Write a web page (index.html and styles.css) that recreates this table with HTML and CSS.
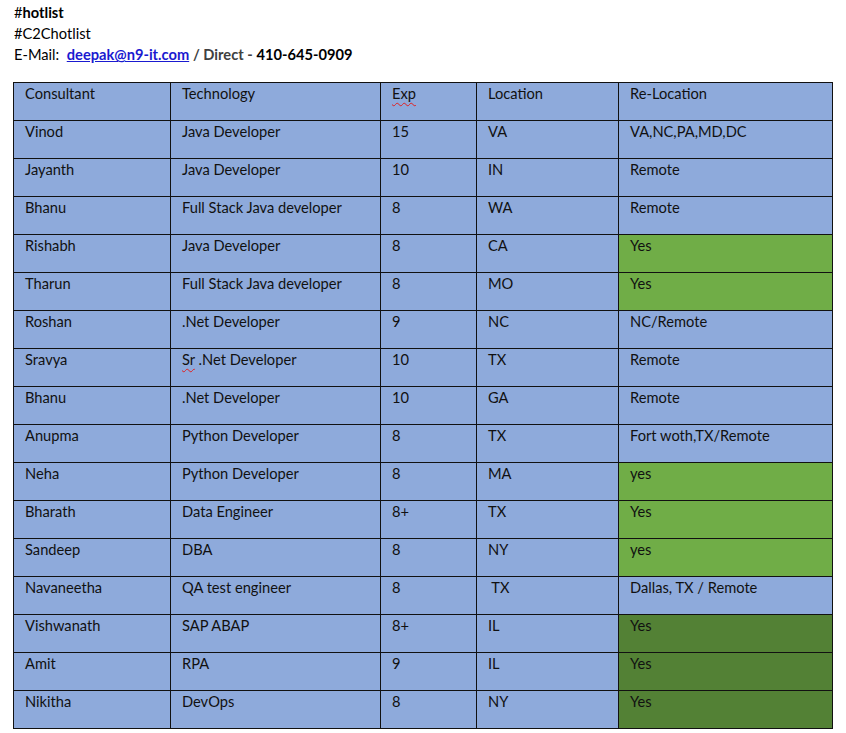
FILE: index.html
```html
<!DOCTYPE html>
<html>
<head>
<meta charset="utf-8">
<link rel="stylesheet" href="styles.css">
</head>
<body>
<div class="page">
  <div class="intro">
    <div class="line">#<b>hotlist</b></div>
    <div class="line">#C2Chotlist</div>
    <div class="line">E-Mail:&nbsp; <a class="mail" href="#">deepak@n9-it.com</a> <span class="direct">/ Direct -</span> <b>410-645-0909</b></div>
  </div>
  <table class="hot">
    <colgroup>
      <col class="c1"><col class="c2"><col class="c3"><col class="c4"><col class="c5">
    </colgroup>
    <tr><td>Consultant</td><td>Technology</td><td><span class="sp">Exp</span></td><td>Location</td><td>Re-Location</td></tr>
    <tr><td>Vinod</td><td>Java Developer</td><td>15</td><td>VA</td><td>VA,NC,PA,MD,DC</td></tr>
    <tr><td>Jayanth</td><td>Java Developer</td><td>10</td><td>IN</td><td>Remote</td></tr>
    <tr><td>Bhanu</td><td>Full Stack Java developer</td><td>8</td><td>WA</td><td>Remote</td></tr>
    <tr><td>Rishabh</td><td>Java Developer</td><td>8</td><td>CA</td><td class="g1">Yes</td></tr>
    <tr><td>Tharun</td><td>Full Stack Java developer</td><td>8</td><td>MO</td><td class="g1">Yes</td></tr>
    <tr><td>Roshan</td><td>.Net Developer</td><td>9</td><td>NC</td><td>NC/Remote</td></tr>
    <tr><td>Sravya</td><td><span class="sp">Sr</span> .Net Developer</td><td>10</td><td>TX</td><td>Remote</td></tr>
    <tr><td>Bhanu</td><td>.Net Developer</td><td>10</td><td>GA</td><td>Remote</td></tr>
    <tr><td>Anupma</td><td>Python Developer</td><td>8</td><td>TX</td><td>Fort woth,TX/Remote</td></tr>
    <tr><td>Neha</td><td>Python Developer</td><td>8</td><td>MA</td><td class="g1">yes</td></tr>
    <tr><td>Bharath</td><td>Data Engineer</td><td>8+</td><td>TX</td><td class="g1">Yes</td></tr>
    <tr><td>Sandeep</td><td>DBA</td><td>8</td><td>NY</td><td class="g1">yes</td></tr>
    <tr><td>Navaneetha</td><td>QA test engineer</td><td>8</td><td>&nbsp;TX</td><td>Dallas, TX / Remote</td></tr>
    <tr><td>Vishwanath</td><td>SAP ABAP</td><td>8+</td><td>IL</td><td class="g2">Yes</td></tr>
    <tr><td>Amit</td><td>RPA</td><td>9</td><td>IL</td><td class="g2">Yes</td></tr>
    <tr><td>Nikitha</td><td>DevOps</td><td>8</td><td>NY</td><td class="g2">Yes</td></tr>
  </table>
</div>
</body>
</html>
```
FILE: styles.css
```css
html, body {
  margin: 0;
  padding: 0;
  background: #ffffff;
}
body {
  font-family: Lato, "Open Sans", Arial, sans-serif;
  font-size: 14.67px;
  color: #000;
}
.page {
  padding: 2px 0 0 14px;
}
.intro .line {
  height: 21px;
  line-height: 21px;
  white-space: nowrap;
}
.intro b {
  font-weight: 700;
}
.mail {
  color: #1a1ad0;
  font-weight: 700;
  text-decoration: underline;
}
.direct {
  color: #404040;
  font-weight: 700;
}
.hot {
  margin-top: 17px;
  margin-left: -1px;
  border-collapse: collapse;
  table-layout: fixed;
  width: 819px;
}
.c1 { width: 157px; }
.c2 { width: 210px; }
.c3 { width: 96px; }
.c4 { width: 142px; }
.c5 { width: 214px; }
.hot td {
  height: 38px;
  box-sizing: border-box;
  border: 1px solid #111;
  background: #8eaadb;
  color: #111;
  vertical-align: top;
  padding: 2px 11px 0 11px;
  line-height: 18px;
  white-space: nowrap;
  overflow: hidden;
}
.hot td.g1 { background: #70ad47; }
.hot td.g2 { background: #538135; }
.sp {
  text-decoration: underline wavy #e02020;
  text-decoration-thickness: 1px;
  text-underline-offset: 3px;
}
```
